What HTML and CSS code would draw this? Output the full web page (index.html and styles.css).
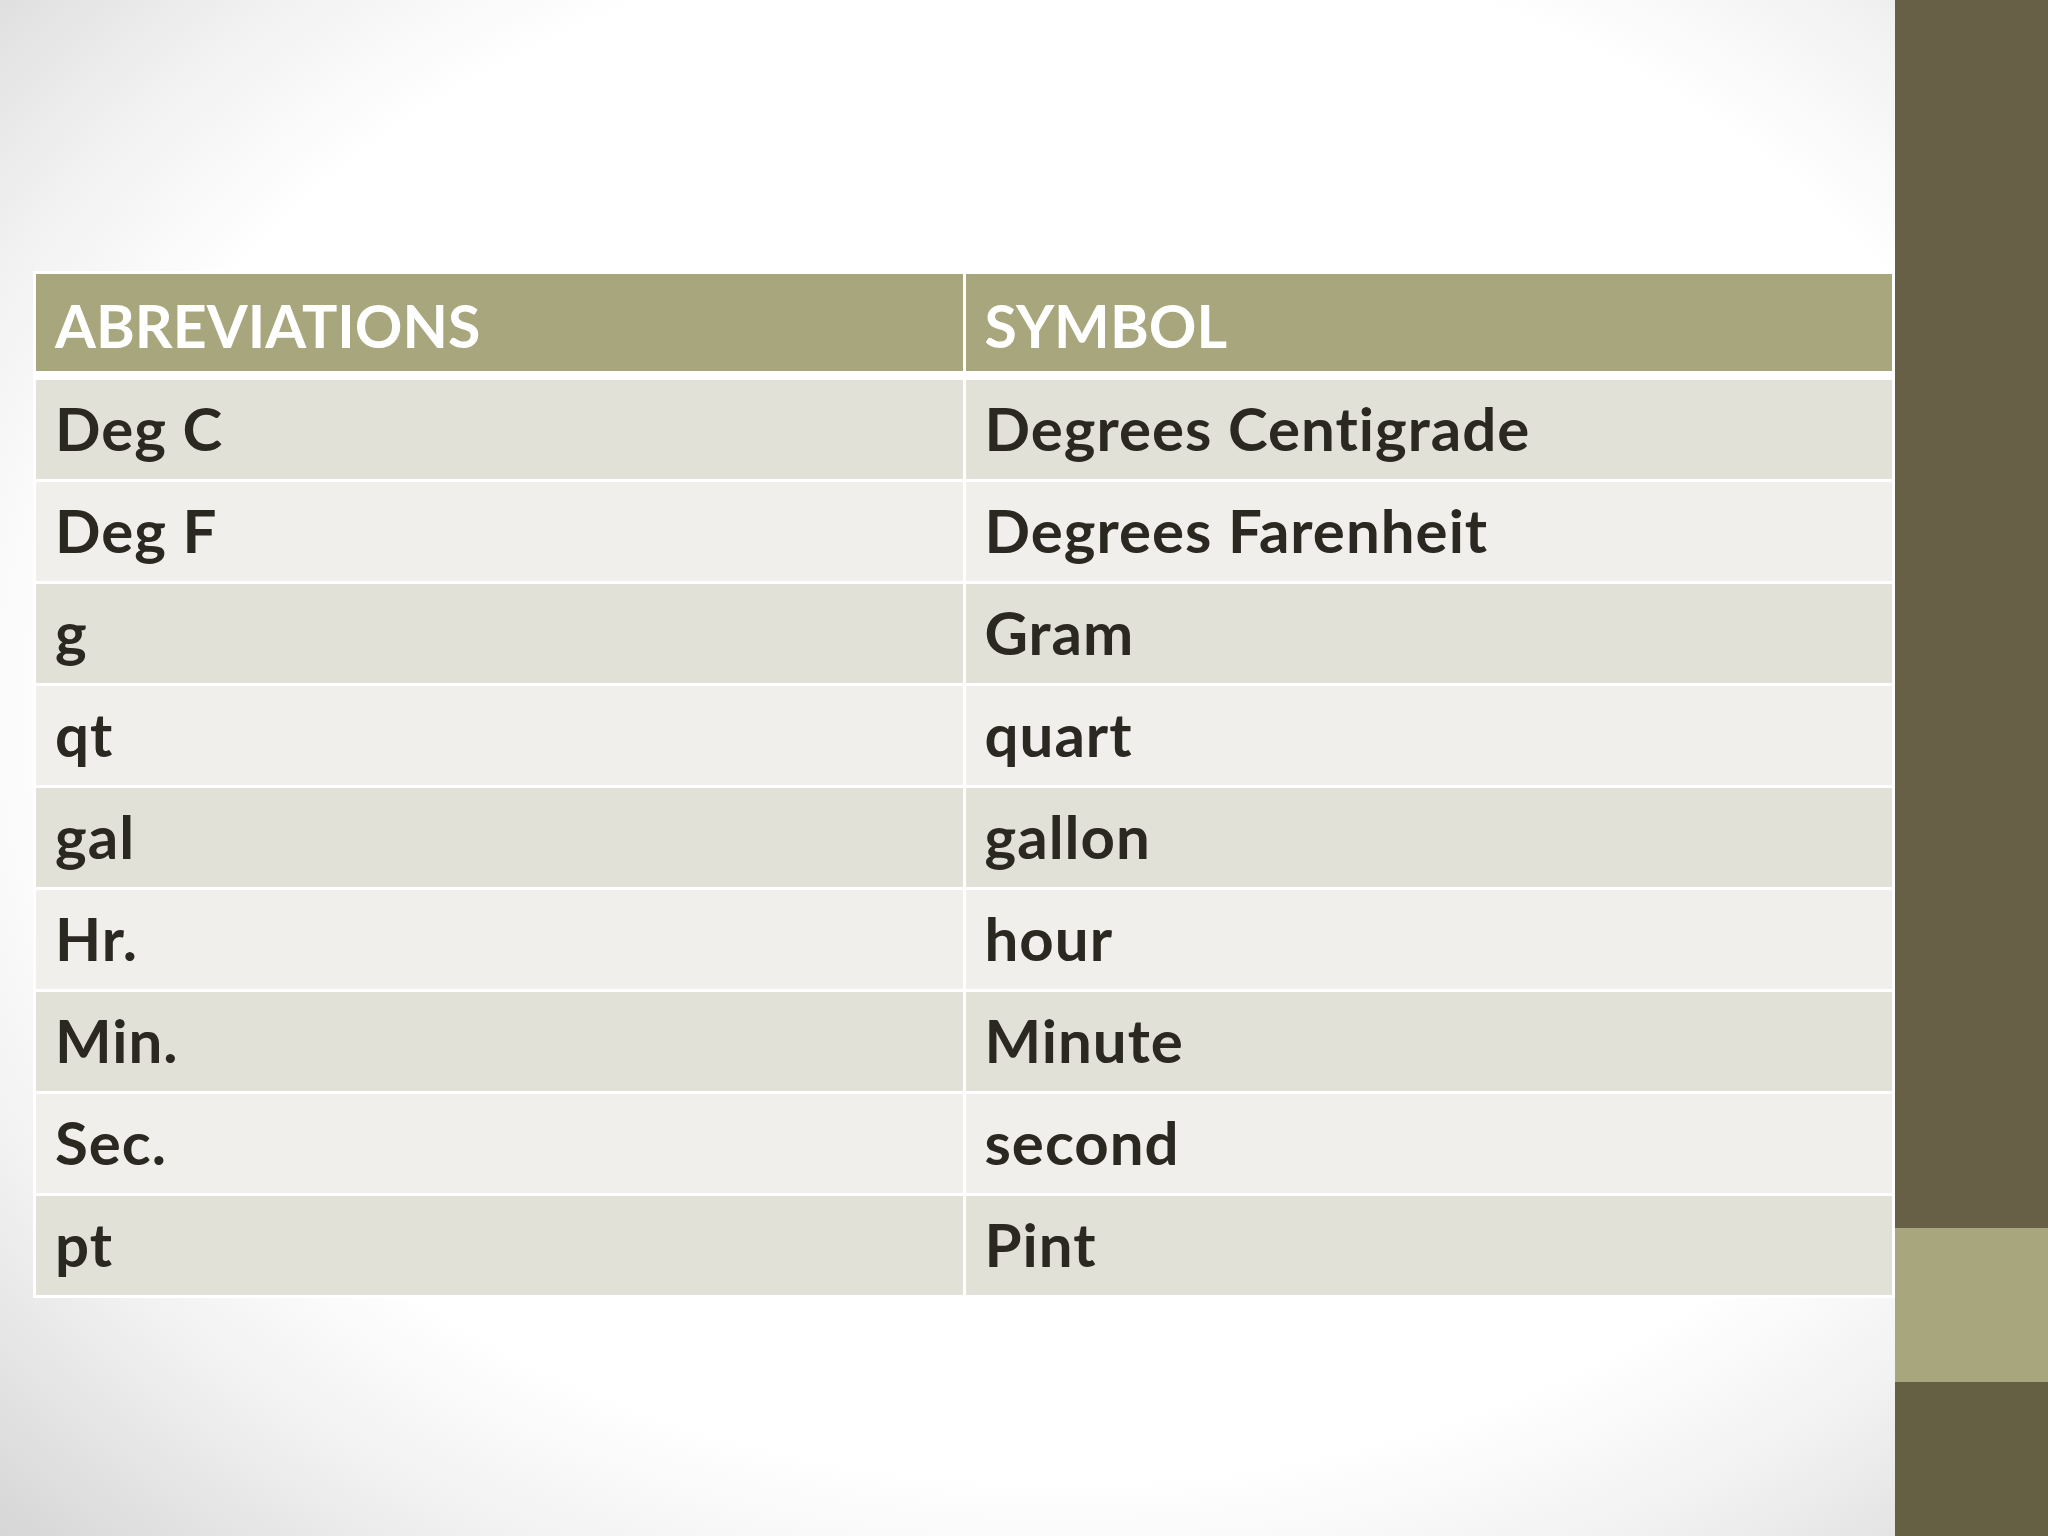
FILE: index.html
```html
<!DOCTYPE html>
<html lang="en">
<head>
<meta charset="utf-8">
<title>Abbreviations</title>
<link rel="stylesheet" href="styles.css">
</head>
<body>
<div class="slide">
  <main class="content">
    <div class="table">
      <div class="cell head">ABREVIATIONS</div>
      <div class="cell head">SYMBOL</div>
      <div class="cell odd">Deg C</div><div class="cell odd">Degrees Centigrade</div>
      <div class="cell even">Deg F</div><div class="cell even">Degrees Farenheit</div>
      <div class="cell odd">g</div><div class="cell odd">Gram</div>
      <div class="cell even">qt</div><div class="cell even">quart</div>
      <div class="cell odd">gal</div><div class="cell odd">gallon</div>
      <div class="cell even">Hr.</div><div class="cell even">hour</div>
      <div class="cell odd">Min.</div><div class="cell odd">Minute</div>
      <div class="cell even">Sec.</div><div class="cell even">second</div>
      <div class="cell odd">pt</div><div class="cell odd">Pint</div>
    </div>
  </main>
  <aside class="side">
    <div class="side-top"></div>
    <div class="side-band"></div>
    <div class="side-bottom"></div>
  </aside>
</div>
</body>
</html>
```
FILE: styles.css
```css
html, body {
  margin: 0;
  padding: 0;
}
body {
  width: 2048px;
  height: 1536px;
  overflow: hidden;
  font-family: Lato, "Open Sans", sans-serif;
}
.slide {
  display: flex;
  width: 2048px;
  height: 1536px;
}
.content {
  flex: 1;
  padding: 271px 0 0 33px;
  box-sizing: border-box;
  background: radial-gradient(ellipse farthest-corner at 56% 46%, #ffffff 66%, #f1f1f1 80%, #d6d6d6 100%);
}
.table {
  display: grid;
  grid-template-columns: 1fr 1fr;
  grid-template-rows: 103px repeat(9, 99px);
  gap: 3px;
  padding: 3px;
  background: #ffffff;
}
.cell {
  display: flex;
  align-items: center;
  box-sizing: border-box;
  padding: 0 0 4px 19px;
  font-size: 60px;
  font-weight: 700;
  letter-spacing: 1px;
  color: #2a2821;
  white-space: nowrap;
}
.head {
  align-self: start;
  height: 97px;
  padding: 5px 0 0 19px;
  font-size: 59px;
  letter-spacing: 0;
  background: #a8a67c;
  color: #ffffff;
}
.odd {
  background: #e2e1d7;
}
.even {
  background: #f0efeb;
}
.side {
  width: 153px;
  display: flex;
  flex-direction: column;
}
.side-top {
  height: 1228px;
  background: #675f46;
}
.side-band {
  height: 154px;
  background: #a8a67c;
}
.side-bottom {
  flex: 1;
  background: #655f44;
}
```
